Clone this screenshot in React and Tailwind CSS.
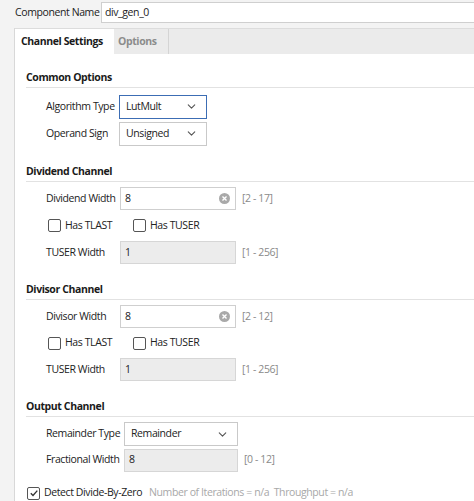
import { ChevronDown } from "lucide-react";

function Select({ value, width, focused }) {
  return (
    <div
      className={`flex items-center justify-between h-[24px] px-[6px] bg-white border ${
        focused ? "border-[#3c6db4] border-[1.5px]" : "border-[#c9c9c9]"
      } ${width}`}
    >
      <span className="text-[#222]">{value}</span>
      <ChevronDown size={13} strokeWidth={2} className="text-[#555] mr-[2px]" />
    </div>
  );
}

function NumInput({ value, width, disabled, clear }) {
  return (
    <div
      className={`flex items-center justify-between h-[23px] px-[4px] border ${
        disabled ? "bg-[#ececec] border-[#d6d6d6]" : "bg-white border-[#cfcfcf]"
      } ${width}`}
    >
      <span className="text-[#222]">{value}</span>
      {clear && (
        <svg width="11" height="11" viewBox="0 0 12 12" className="mr-[1px]">
          <circle cx="6" cy="6" r="6" fill="#a9a9a9" />
          <path d="M3.8 3.8 L8.2 8.2 M8.2 3.8 L3.8 8.2" stroke="#fff" strokeWidth="1.5" />
        </svg>
      )}
    </div>
  );
}

function Checkbox({ label, checked }) {
  return (
    <div className="flex items-center gap-[4px]">
      <div className="w-[13px] h-[13px] rounded-[2px] border border-[#555] bg-white flex items-center justify-center">
        {checked && (
          <svg width="10" height="10" viewBox="0 0 10 10">
            <path d="M1.8 5.2 L4 7.4 L8.3 2.6" stroke="#333" strokeWidth="1.4" fill="none" />
          </svg>
        )}
      </div>
      <span className="text-[#222]">{label}</span>
    </div>
  );
}

function Header({ children }) {
  return (
    <div className="h-[19px] flex items-center font-bold text-[#1a1a1a] border-b border-[#e2e2e2]">
      {children}
    </div>
  );
}

function Range({ children }) {
  return <span className="ml-[6px] text-[#8a8a8a]">{children}</span>;
}

export default function App() {
  return (
    <div className="w-[474px] h-[501px] overflow-hidden whitespace-nowrap bg-[#f3f3f3] font-['Open_Sans',sans-serif] text-[10.5px] tracking-[-0.4px] text-[#222] flex flex-col">
      {/* Component name */}
      <div className="flex items-start h-[28px] pl-[15px] pt-[2px] shrink-0">
        <span className="w-[86px] h-[21px] flex items-center text-[#222]">Component Name</span>
        <div className="flex-1 h-[21px] bg-white border border-[#cfcfcf] border-r-0 flex items-center px-[3px]">
          div_gen_0
        </div>
      </div>

      <div className="flex-1 ml-[14px] flex flex-col border-l border-[#d8d8d8] bg-white">
        {/* Tabs */}
        <div className="flex h-[26px] bg-[#ebebeb] border-t border-[#dcdcdc] shrink-0">
          <div className="w-[99px] bg-white flex items-center pl-[6px] font-bold text-[#1a1a1a]">
            Channel Settings
          </div>
          <div className="w-[55px] flex items-center pl-[4px] font-bold text-[#8c8c8c] border-r border-[#d4d4d4]">
            Options
          </div>
        </div>

        {/* Content */}
        <div className="flex-1 pl-[11px] pt-[15px]">
          {/* Common Options */}
          <Header>Common Options</Header>
          <div className="pl-[20px] pt-[5px]">
            <div className="flex items-center h-[27px]">
              <span className="w-[73px]">Algorithm Type</span>
              <Select value="LutMult" width="w-[88px]" focused />
            </div>
            <div className="flex items-center h-[27px]">
              <span className="w-[73px]">Operand Sign</span>
              <Select value="Unsigned" width="w-[88px]" />
            </div>
          </div>

          {/* Dividend Channel */}
          <div className="mt-[16px]">
            <Header>Dividend Channel</Header>
          </div>
          <div className="pl-[20px] pt-[3px]">
            <div className="flex items-center h-[27px]">
              <span className="w-[74px]">Dividend Width</span>
              <NumInput value="8" width="w-[116px]" clear />
              <Range>[2 - 17]</Range>
            </div>
            <div className="flex items-center h-[27px] pl-[2px]">
              <div className="w-[85px]">
                <Checkbox label="Has TLAST" />
              </div>
              <Checkbox label="Has TUSER" />
            </div>
            <div className="flex items-center h-[27px]">
              <span className="w-[74px]">TUSER Width</span>
              <NumInput value="1" width="w-[116px]" disabled />
              <Range>[1 - 256]</Range>
            </div>
          </div>

          {/* Divisor Channel */}
          <div className="mt-[15px]">
            <Header>Divisor Channel</Header>
          </div>
          <div className="pl-[20px] pt-[3px]">
            <div className="flex items-center h-[27px]">
              <span className="w-[74px]">Divisor Width</span>
              <NumInput value="8" width="w-[116px]" clear />
              <Range>[2 - 12]</Range>
            </div>
            <div className="flex items-center h-[26px] pl-[2px]">
              <div className="w-[85px]">
                <Checkbox label="Has TLAST" />
              </div>
              <Checkbox label="Has TUSER" />
            </div>
            <div className="flex items-center h-[27px]">
              <span className="w-[74px]">TUSER Width</span>
              <NumInput value="1" width="w-[116px]" disabled />
              <Range>[1 - 256]</Range>
            </div>
          </div>

          {/* Output Channel */}
          <div className="mt-[15px]">
            <Header>Output Channel</Header>
          </div>
          <div className="pl-[20px] pt-[4px]">
            <div className="flex items-center h-[26px]">
              <span className="w-[78px]">Remainder Type</span>
              <Select value="Remainder" width="w-[114px]" />
            </div>
            <div className="flex items-center h-[26px]">
              <span className="w-[78px]">Fractional Width</span>
              <NumInput value="8" width="w-[114px]" disabled />
              <Range>[0 - 12]</Range>
            </div>
          </div>

          <div className="flex items-center h-[20px] mt-[10px] ml-[1px]">
            <Checkbox label="Detect Divide-By-Zero" checked />
            <span className="ml-[7px] text-[#a8a8a8]">
              Number of Iterations = n/a&nbsp;&nbsp;Throughput = n/a
            </span>
          </div>
        </div>
      </div>
      <div className="h-[4px] bg-[#e6e6e6] shrink-0" />
    </div>
  );
}
